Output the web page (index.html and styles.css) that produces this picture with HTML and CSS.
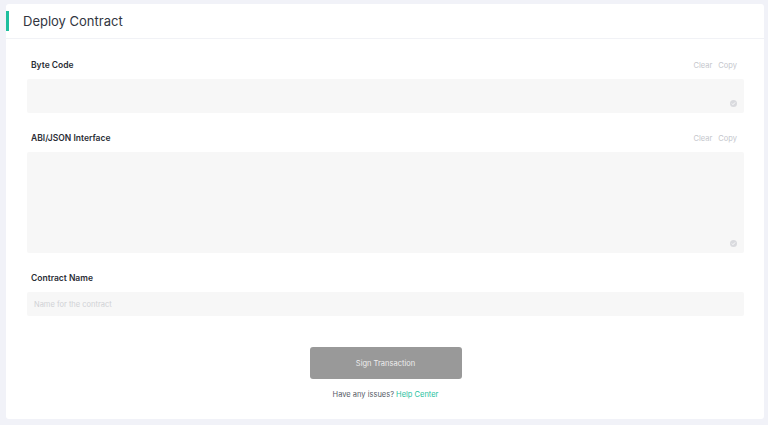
FILE: index.html
```html
<!DOCTYPE html>
<html lang="en">
<head>
  <meta charset="UTF-8" />
  <title>Deploy Contract</title>
  <link rel="stylesheet" href="styles.css">
</head>
<body>
  <div class="card">
    <div class="card-head">
      <h1>Deploy Contract</h1>
    </div>

    <div class="card-body">
      <div class="field">
        <div class="field-top">
          <label>Byte Code</label>
          <div class="actions"><span>Clear</span><span>Copy</span></div>
        </div>
        <div class="area area-sm">
          <svg class="check" viewBox="0 0 8 8"><circle cx="4" cy="4" r="4" fill="#d9dade"/><path d="M2.2 4.1l1.2 1.2 2.4-2.5" fill="none" stroke="#fff" stroke-width="1"/></svg>
        </div>
      </div>

      <div class="field">
        <div class="field-top">
          <label>ABI/JSON Interface</label>
          <div class="actions"><span>Clear</span><span>Copy</span></div>
        </div>
        <div class="area area-lg">
          <svg class="check" viewBox="0 0 8 8"><circle cx="4" cy="4" r="4" fill="#d9dade"/><path d="M2.2 4.1l1.2 1.2 2.4-2.5" fill="none" stroke="#fff" stroke-width="1"/></svg>
        </div>
      </div>

      <div class="field">
        <div class="field-top">
          <label>Contract Name</label>
        </div>
        <input type="text" class="name-input" placeholder="Name for the contract" />
      </div>

      <div class="submit">
        <button class="btn-sign">Sign Transaction</button>
        <p class="help">Have any issues? <a href="#">Help Center</a></p>
      </div>
    </div>
  </div>
</body>
</html>
```

FILE: styles.css
```css
body {
  margin: 0;
  background: #f1f2f8;
  font-family: "Inter", "Noto Sans", sans-serif;
  color: #2f3340;
}

.card {
  margin: 4px 4px 6px 6px;
  background: #fff;
  border-radius: 3px;
  height: 415px;
  box-sizing: border-box;
}

.card-head {
  height: 34px;
  border-bottom: 1px solid #f1f2f6;
  display: flex;
  align-items: center;
  position: relative;
}
.card-head::before {
  content: "";
  position: absolute;
  left: 0;
  top: 7px;
  width: 3px;
  height: 20px;
  background: #1ebf9e;
}
.card-head h1 {
  margin: 0 0 0 17px;
  font-size: 13px;
  font-weight: 400;
  color: #32363f;
}

.card-body {
  padding: 18px 20px 0 21px;
}

.field {
  margin-bottom: 17px;
}
.field-top {
  display: flex;
  justify-content: space-between;
  align-items: center;
  padding: 0 7px 0 4px;
  height: 16px;
  margin-bottom: 6px;
}
.field-top label {
  font-size: 8.5px;
  font-weight: 600;
  color: #2a2d35;
}
.actions {
  display: flex;
  gap: 6px;
  font-size: 7.5px;
  color: #c4c6cc;
}

.area {
  background: #f7f7f7;
  border-radius: 2px;
  position: relative;
}
.area-sm { height: 34px; }
.area-lg { height: 101px; }

.check {
  position: absolute;
  right: 7px;
  bottom: 6px;
  width: 7px;
  height: 7px;
}

.name-input {
  display: block;
  width: 100%;
  box-sizing: border-box;
  height: 24px;
  border: none;
  outline: none;
  background: #f7f7f7;
  border-radius: 2px;
  padding: 0 7px;
  font-family: "Inter", "Noto Sans", sans-serif;
  font-size: 7.5px;
}
.name-input::placeholder {
  color: #d0d1d5;
}

.submit {
  display: flex;
  flex-direction: column;
  align-items: center;
  padding-top: 14px;
}
.btn-sign {
  width: 152px;
  height: 32px;
  border: none;
  border-radius: 3px;
  background: #999999;
  color: #eeeeee;
  font-family: "Inter", "Noto Sans", sans-serif;
  font-size: 7.5px;
}
.help {
  margin: 11px 0 0;
  font-size: 7.5px;
  color: #555a66;
}
.help a {
  color: #1ebf9e;
  text-decoration: none;
}
```
